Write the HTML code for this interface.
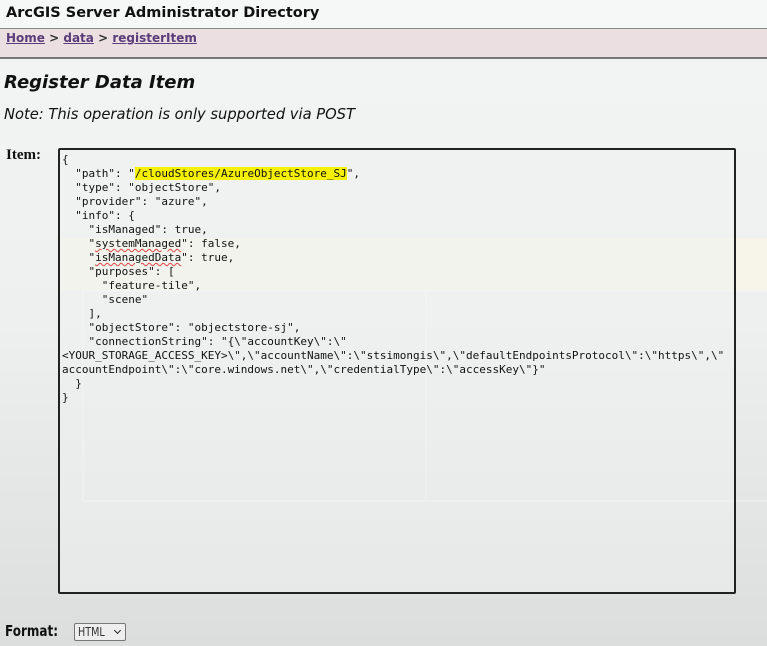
<!DOCTYPE html>
<html><head><meta charset="utf-8"><style>
body{margin:0;width:767px;height:646px;overflow:hidden;position:relative;font-family:"DejaVu Sans",sans-serif;background:linear-gradient(180deg,#f3f4f4 0%,#eef0f0 50%,#dcdddd 100%);}
.hdr{position:absolute;left:0;top:0;width:767px;height:28px;background:#f6f7f7;border-bottom:1px solid #888;}
.hdr span{position:absolute;left:6px;top:5px;font-size:14.5px;font-weight:bold;color:#111;}
.bc{position:absolute;left:0;top:29px;width:767px;height:28px;background:#ebdfe1;border-bottom:2px solid #777;}
.bc span{position:absolute;left:6px;top:2px;font-size:12px;font-weight:bold;color:#333;}
.bc a{color:#5a3d7a;text-decoration:underline;}
h1{position:absolute;left:4px;top:72px;margin:0;font-size:18px;font-style:italic;font-weight:bold;color:#111;}
.note{position:absolute;left:4px;top:106px;font-size:14.7px;font-style:italic;color:#111;}
.lbl{position:absolute;left:6px;top:147px;font-family:"Liberation Serif",serif;font-weight:bold;font-size:15px;color:#111;}
.ta{position:absolute;left:58px;top:148px;width:674px;height:442px;border:2px solid #222;border-radius:2px;background:rgba(240,242,242,.5);}
pre{margin:0;position:absolute;left:2px;top:3px;font-family:"DejaVu Sans Mono",monospace;font-size:11px;line-height:14px;color:#111;}
.hl{background:#f5f000;}
.sq{text-decoration:underline wavy #d44;text-decoration-thickness:1px;}
.ghost{position:absolute;border:2px solid rgba(255,255,255,.3);}
.fmt{position:absolute;left:5px;top:622px;font-size:15px;font-weight:bold;color:#111;transform:scaleX(.8);transform-origin:left;white-space:nowrap;}
.sel{position:absolute;left:74px;top:623px;width:52px;height:18px;border:1px solid #777;border-radius:2px;background:#eee;font-size:12px;color:#333;line-height:16px;padding-left:3px;box-sizing:border-box;white-space:nowrap;}
.sel span{position:absolute;left:3px;top:0;transform:scaleX(.8);transform-origin:left;}
.sel i{position:absolute;left:40px;top:4px;width:4px;height:4px;border-right:1.5px solid #222;border-bottom:1.5px solid #222;transform:rotate(45deg);}
</style></head><body>
<div class="ghost" style="left:82px;top:290px;width:685px;height:208px"></div>
<div class="ghost" style="left:425px;top:290px;width:0;height:208px;border-width:0 0 0 2px"></div>
<div style="position:absolute;left:60px;top:238px;width:707px;height:52px;background:rgba(255,250,225,.5)"></div>
<div class="hdr"><span>ArcGIS Server Administrator Directory</span></div>
<div class="bc"><span><a>Home</a> &gt; <a>data</a> &gt; <a>registerItem</a></span></div>
<h1>Register Data Item</h1>
<div class="note">Note: This operation is only supported via POST</div>
<div class="lbl">Item:</div>
<div class="ta"><pre>{
  "path": "<span class="hl">/cloudStores/AzureObjectStore_SJ</span>",
  "type": "objectStore",
  "provider": "azure",
  "info": {
    "isManaged": true,
    "<span class="sq">systemManaged</span>": false,
    "<span class="sq">isManagedData</span>": true,
    "purposes": [
      "feature-tile",
      "scene"
    ],
    "objectStore": "objectstore-sj",
    "connectionString": "{\"accountKey\":\"
&lt;YOUR_STORAGE_ACCESS_KEY&gt;\",\"accountName\":\"stsimongis\",\"defaultEndpointsProtocol\":\"https\",\"
accountEndpoint\":\"core.windows.net\",\"credentialType\":\"accessKey\"}"
  }
}</pre></div>
<div class="fmt">Format:</div>
<div class="sel"><span>HTML</span><i></i></div>
</body></html>
